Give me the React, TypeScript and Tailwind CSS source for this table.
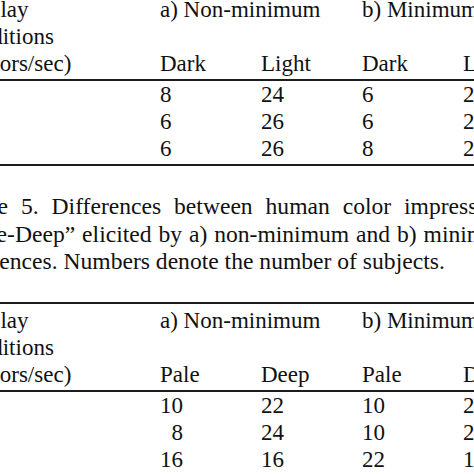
const serif = { fontFamily: '"Liberation Serif", "Times New Roman", serif' };

type Cell = { v: string; pad?: boolean };

const tables: {
  labels: [string, string];
  rows: Cell[][];
}[] = [
  {
    labels: ["Dark", "Light"],
    rows: [
      [{ v: "8" }, { v: "24" }, { v: "6" }, { v: "26" }],
      [{ v: "6" }, { v: "26" }, { v: "6" }, { v: "26" }],
      [{ v: "6" }, { v: "26" }, { v: "8" }, { v: "24" }],
    ],
  },
  {
    labels: ["Pale", "Deep"],
    rows: [
      [{ v: "10" }, { v: "22" }, { v: "10" }, { v: "22" }],
      [{ v: "8", pad: true }, { v: "24" }, { v: "10" }, { v: "22" }],
      [{ v: "16" }, { v: "16" }, { v: "22" }, { v: "10" }],
    ],
  },
];

function DataTable({ labels, rows, last }: { labels: [string, string]; rows: Cell[][]; last?: boolean }) {
  return (
    <div className={last ? "border-t-2 border-[#1c1c1c] pt-[3px]" : ""}>
      {/* Header */}
      <div className="flex border-b-2 border-[#1c1c1c] pb-[2px]">
        <div className="w-[195px] shrink-0 pl-[35px] whitespace-nowrap">
          <div className="-ml-[43px]">Display</div>
          <div className="-ml-[42px]">conditions</div>
          <div className="-ml-[36px]">(colors/sec)</div>
        </div>
        <div>
          <div className="flex">
            <span className="w-[202px]">a) Non-minimum</span>
            <span className="w-[202px]">b) Minimum</span>
          </div>
          <div className="h-[27px]" />
          <div className="flex">
            {[...labels, ...labels].map((l, i) => (
              <span key={i} className="w-[101px]">
                {l}
              </span>
            ))}
          </div>
        </div>
      </div>

      {/* Rows */}
      <div className={last ? "" : "border-b-2 border-[#1c1c1c] pb-[2px]"}>
        {rows.map((row, r) => (
          <div key={r} className="flex">
            <span className="w-[195px] shrink-0" />
            {row.map((c, i) => (
              <span key={i} className={c.pad ? "w-[101px] pl-[11.5px]" : "w-[101px]"}>
                {c.v}
              </span>
            ))}
          </div>
        ))}
      </div>
    </div>
  );
}

export default function App() {
  return (
    <div className="w-[474px] h-[474px] overflow-hidden bg-white text-[#111111]" style={serif}>
      <div className="w-[620px] -ml-[35px] -mt-[4px] text-[23px] leading-[27px]">
        <DataTable labels={tables[0].labels} rows={tables[0].rows} />

        {/* Caption */}
        <div className="-ml-[9px] mt-[27px] text-[23.6px] leading-[27.5px] whitespace-nowrap">
          <div className="[word-spacing:7px]">
            Table 5. Differences between human color impressions of
          </div>
          <div className="[word-spacing:1px]">
            &ldquo;Pale-Deep&rdquo; elicited by a) non-minimum and b) minimum color
          </div>
          <div>sequences. Numbers denote the number of subjects.</div>
        </div>

        <div className="mt-[26px]">
          <DataTable labels={tables[1].labels} rows={tables[1].rows} last />
        </div>
      </div>
    </div>
  );
}
